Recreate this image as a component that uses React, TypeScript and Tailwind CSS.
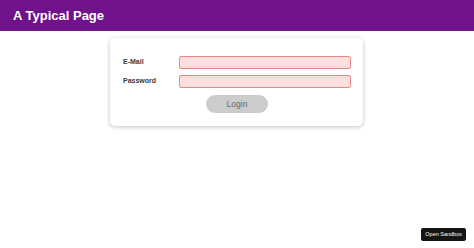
export default function App() {
  return (
    <div className="relative h-[248px] w-[474px] bg-white font-['Liberation_Sans',Arial,sans-serif]">
      <header className="flex h-[31px] items-center bg-[#70128a] px-[13px]">
        <h1 className="text-[13px] font-bold text-white">A Typical Page</h1>
      </header>

      <div className="ml-[110px] mt-[7px] w-[253px] rounded-[5px] bg-white pb-[13px] pl-[13px] pr-[12px] pt-[18px] shadow-[0_1px_4px_rgba(0,0,0,0.25)]">
        <div className="flex flex-col gap-[6px]">
          <div className="flex items-center">
            <label className="w-[56px] text-[7px] font-bold text-[#3a3a3a]">E-Mail</label>
            <input className="ml-auto h-[13px] w-[172px] rounded-[2px] border border-[#e58a8a] bg-[#fddede] outline-none" />
          </div>
          <div className="flex items-center">
            <label className="w-[56px] text-[7px] font-bold text-[#3a3a3a]">Password</label>
            <input
              type="password"
              className="ml-auto h-[13px] w-[172px] rounded-[2px] border border-[#e58a8a] bg-[#fddede] outline-none"
            />
          </div>
        </div>
        <div className="mt-[7px] flex justify-center">
          <button className="h-[18px] w-[62px] rounded-full bg-[#cccccc] text-[8.5px] text-[#666]">
            Login
          </button>
        </div>
      </div>

      <button className="absolute bottom-[7px] right-[8px] h-[13px] rounded-[2px] bg-[#151515] px-[4px] text-[5.5px] text-white">
        Open Sandbox
      </button>
    </div>
  );
}
